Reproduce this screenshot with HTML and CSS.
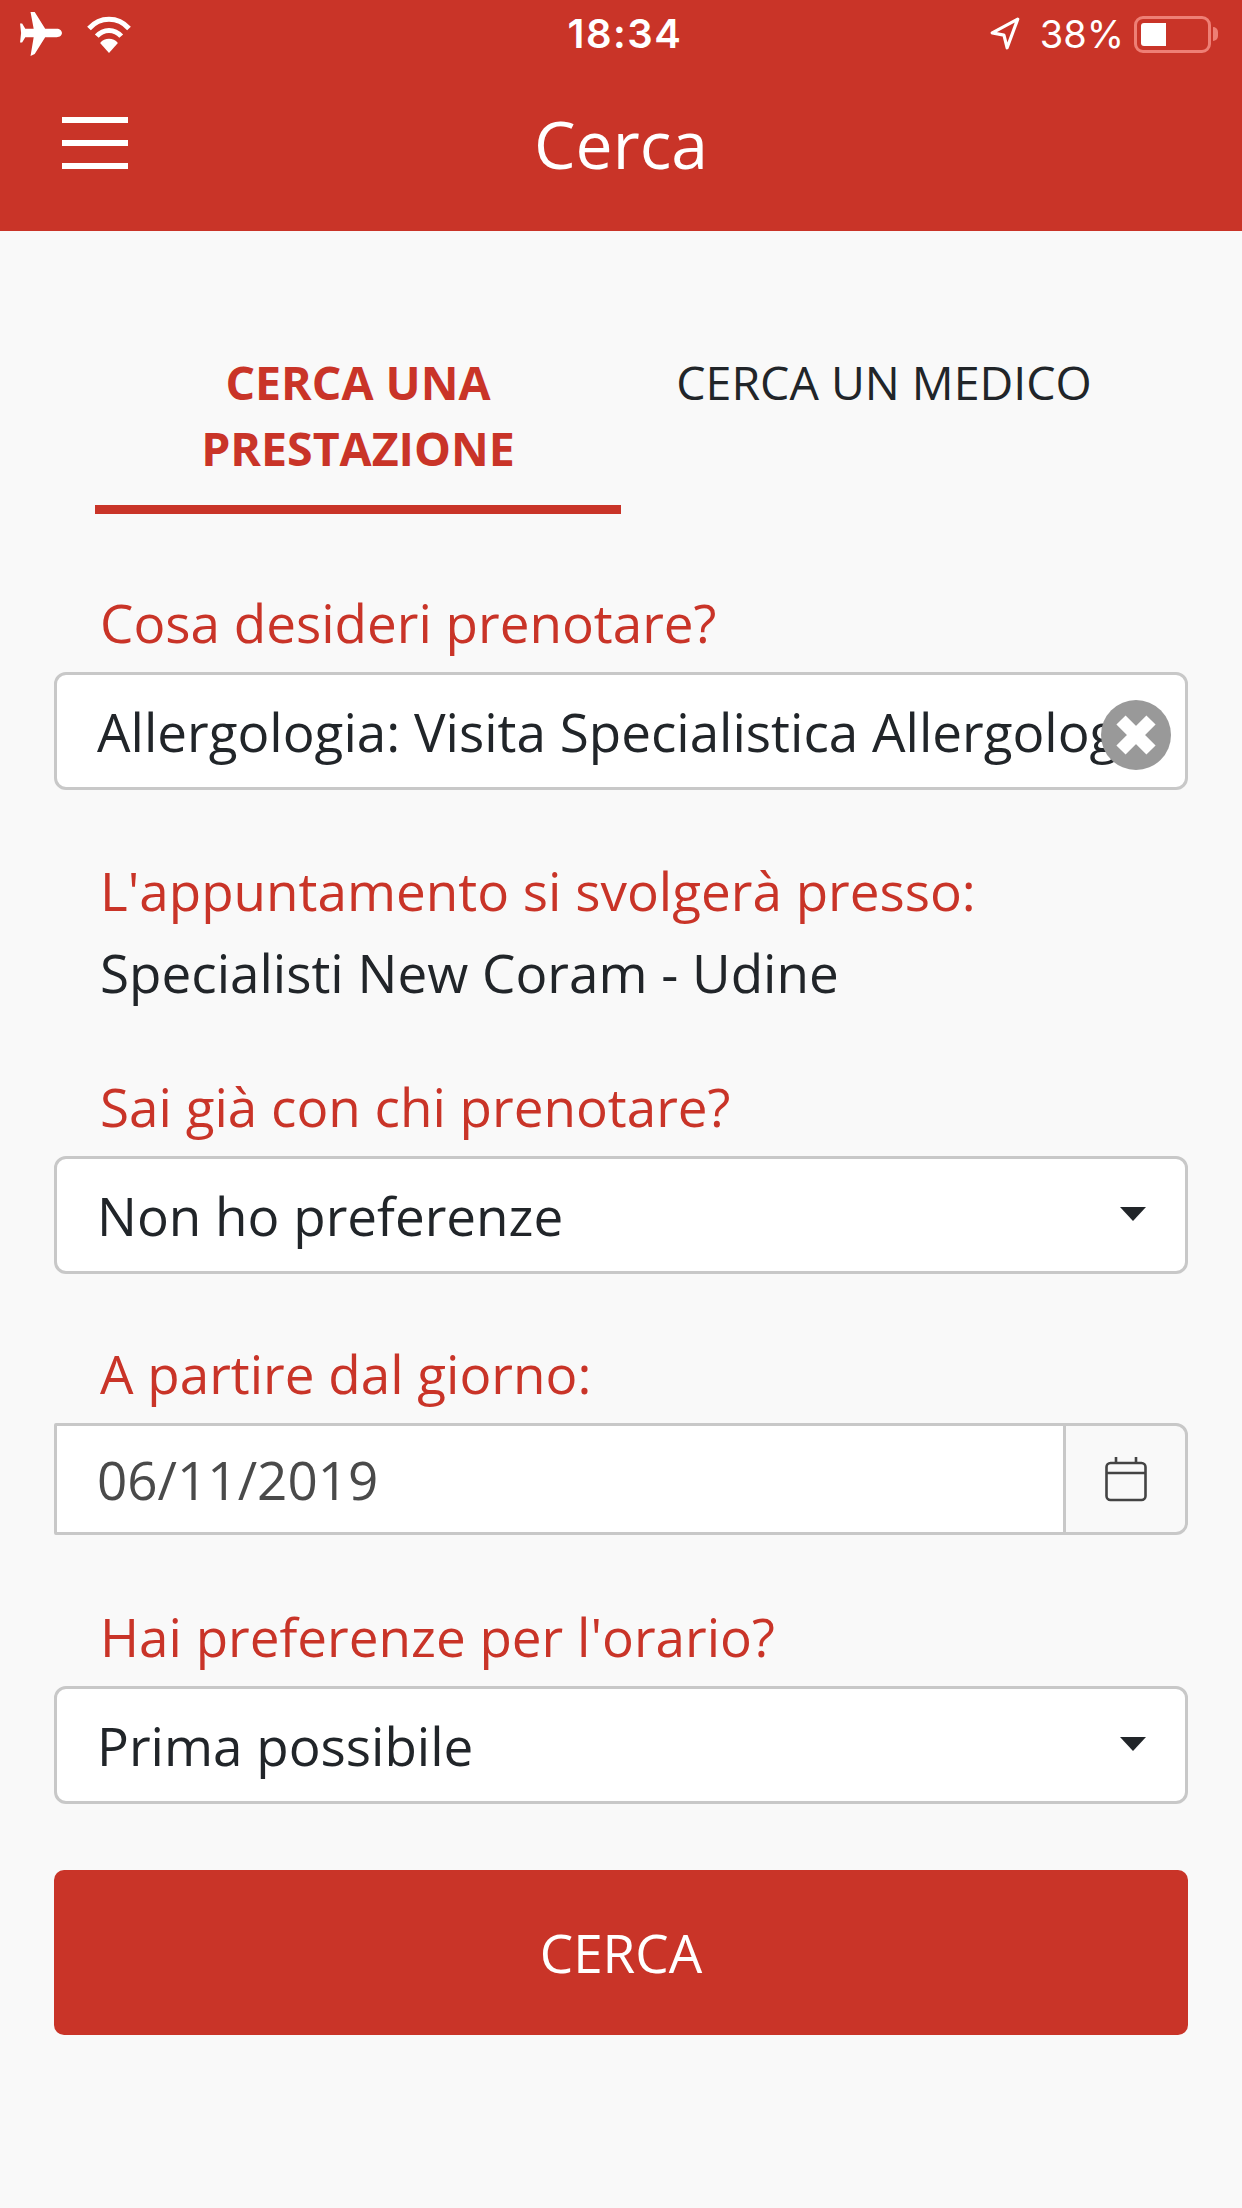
FILE: index.html
```html
<!DOCTYPE html>
<html lang="it">
<head>
    <meta charset="UTF-8">
    <meta name="viewport" content="width=device-width, initial-scale=1.0">
    <title>Cerca</title>
    <link rel="stylesheet" href="styles.css">
</head>
<body>
    <header class="app-header">
        <div class="status-bar">
            <div class="status-left">
                <svg class="icon-plane" viewBox="0 0 40 42"><path fill="#fff" d="M10 0l4 0 10 16 11 0c3 0 5 2 5 4s-2 4-5 4l-11 0-10 16-4 2 3-18-8 0-3 5-2 0 1-9-1-9 2 0 3 5 8 0z"/></svg>
                <svg class="icon-wifi" viewBox="0 0 40 36"><path fill="none" stroke="#fff" stroke-width="4.5" d="M2 13c10-11 26-11 36 0"/><path fill="none" stroke="#fff" stroke-width="4.5" d="M9 20c6-7 16-7 22 0"/><path fill="#fff" d="M12 26c4-5 12-5 16 0l-8 9z"/></svg>
            </div>
            <div class="status-time">18:34</div>
            <div class="status-right">
                <svg class="icon-location" viewBox="0 0 28 32"><path fill="none" stroke="#fff" stroke-width="3" stroke-linejoin="round" d="M26 2L2 15l11 2 3 12z"/></svg>
                <span class="status-battery">38%</span>
                <div class="battery"><div class="battery-level"></div></div>
                <div class="battery-tip"></div>
            </div>
        </div>
        <div class="toolbar">
            <div class="menu-btn"><span></span><span></span><span></span></div>
            <h1 class="toolbar-title">Cerca</h1>
        </div>
    </header>

    <main class="content">
        <div class="tabs">
            <div class="tab active">CERCA UNA PRESTAZIONE</div>
            <div class="tab">CERCA UN MEDICO</div>
        </div>

        <div class="form-group first">
            <div class="field-label">Cosa desideri prenotare?</div>
            <div class="field clearable">
                <span class="field-text">Allergologia: Visita Specialistica Allergologica</span>
                <span class="clear-btn">
                    <svg viewBox="0 0 70 70"><circle cx="35" cy="35" r="35" fill="#999"/><path stroke="#fff" stroke-width="13" d="M20 20l30 30M50 20L20 50"/></svg>
                </span>
            </div>
        </div>

        <div class="form-group place">
            <div class="field-label">L'appuntamento si svolgerà presso:</div>
            <div class="place-name">Specialisti New Coram - Udine</div>
        </div>

        <div class="form-group who">
            <div class="field-label">Sai già con chi prenotare?</div>
            <div class="field select">
                <span class="field-text">Non ho preferenze</span>
                <span class="caret"></span>
            </div>
        </div>

        <div class="form-group from">
            <div class="field-label">A partire dal giorno:</div>
            <div class="date-group">
                <span class="date-value">06/11/2019</span>
                <span class="date-addon">
                    <svg viewBox="0 0 42 46"><rect x="1.5" y="7" width="39" height="37" rx="4" fill="none" stroke="#444" stroke-width="2.6"/><path stroke="#444" stroke-width="2.6" d="M1.5 17h39M11 1v6M31 1v6"/></svg>
                </span>
            </div>
        </div>

        <div class="form-group hours">
            <div class="field-label">Hai preferenze per l'orario?</div>
            <div class="field select">
                <span class="field-text">Prima possibile</span>
                <span class="caret"></span>
            </div>
        </div>

        <button class="search-btn" type="button">CERCA</button>
    </main>
</body>
</html>
```

FILE: styles.css
```css
* {
  box-sizing: border-box;
}

html, body {
  margin: 0;
  height: 100%;
}

body {
  background-color: #f9f9f9;
  font-family: "Open Sans", sans-serif;
  color: #212529;
}

.app-header {
  height: 231px;
  background-color: #c93428;
  color: #fff;
}

.status-bar {
  height: 66px;
  padding: 12px 24px 0 18px;
  display: grid;
  grid-template-columns: 1fr auto 1fr;
  align-items: start;
}

.status-left, .status-right {
  display: flex;
  align-items: center;
}

.status-right {
  justify-content: flex-end;
}

.icon-plane {
  width: 46px;
  height: 44px;
}

.icon-wifi {
  width: 46px;
  height: 40px;
  margin-left: 22px;
}

.status-time {
  font-family: Inter, sans-serif;
  font-size: 40px;
  font-weight: 600;
  letter-spacing: 1.5px;
  line-height: 44px;
  padding-left: 14px;
}

.icon-location {
  width: 30px;
  height: 34px;
  margin-right: 20px;
}

.status-battery {
  font-family: Inter, sans-serif;
  font-size: 38px;
  line-height: 44px;
  margin-right: 10px;
}

.battery {
  width: 77px;
  height: 37px;
  border: 3px solid #ee7f75;
  border-radius: 9px;
  padding: 4px;
}

.battery-level {
  width: 25px;
  height: 100%;
  background-color: #fff;
  border-radius: 3px 0 0 3px;
}

.battery-tip {
  width: 5px;
  height: 14px;
  margin-left: 2px;
  background-color: #ee7f75;
  border-radius: 0 6px 6px 0;
}

.toolbar {
  height: 164px;
  display: flex;
  align-items: center;
  justify-content: center;
  position: relative;
}

.menu-btn {
  position: absolute;
  left: 62px;
  top: 51px;
  width: 66px;
}

.menu-btn span {
  display: block;
  height: 6px;
  background-color: #fff;
  margin-bottom: 17px;
}

.toolbar-title {
  margin: 0 0 10px;
  font-size: 66px;
  font-weight: 400;
  line-height: 80px;
}

.content {
  padding: 118px 54px 0;
}

.tabs {
  display: flex;
  padding: 0 41px;
}

.tab {
  flex: 0 0 526px;
  text-align: center;
  font-size: 46.5px;
  line-height: 66px;
  white-space: nowrap;
}

.tab.active {
  color: #c93428;
  font-weight: 700;
  padding: 0 60px 24px;
  border-bottom: 9px solid #c93428;
  white-space: normal;
}

.first {
  margin-top: 76px;
}

.place {
  margin-top: 68px;
}

.who {
  margin-top: 68px;
}

.from {
  margin-top: 67px;
}

.hours {
  margin-top: 69px;
}

.field-label {
  color: #c93428;
  font-size: 53px;
  line-height: 66px;
  padding-left: 46px;
  margin-bottom: 16px;
}

.place-name {
  font-size: 53px;
  line-height: 66px;
  padding-left: 46px;
}

.field {
  height: 118px;
  background-color: #fff;
  border: 3px solid #c8c8c8;
  border-radius: 12px;
  padding: 0 40px;
  display: flex;
  align-items: center;
  position: relative;
  font-size: 53px;
  white-space: nowrap;
}

.clearable {
  padding-right: 58px;
}

.clearable .field-text {
  overflow: hidden;
}

.clear-btn {
  position: absolute;
  right: 14px;
  top: 25px;
  width: 70px;
  height: 70px;
}

.clear-btn svg {
  display: block;
  width: 70px;
  height: 70px;
}

.caret {
  position: absolute;
  right: 39px;
  top: 48px;
  border-style: solid;
  border-width: 14px 13px 0;
  border-color: #212529 transparent transparent;
}

.date-group {
  height: 112px;
  display: flex;
  border: 3px solid #c8c8c8;
  border-radius: 2px 12px 12px 2px;
  font-size: 53px;
}

.date-value {
  flex: 1;
  background-color: #fff;
  padding-left: 40px;
  display: flex;
  align-items: center;
  color: #4a4a4a;
}

.date-addon {
  width: 122px;
  border-left: 3px solid #c8c8c8;
  display: flex;
  align-items: center;
  justify-content: center;
}

.date-addon svg {
  width: 42px;
  height: 46px;
}

.search-btn {
  display: block;
  width: 100%;
  height: 165px;
  margin-top: 66px;
  border: none;
  border-radius: 10px;
  background-color: #c93428;
  color: #fff;
  font-family: inherit;
  font-size: 53px;
}
```
